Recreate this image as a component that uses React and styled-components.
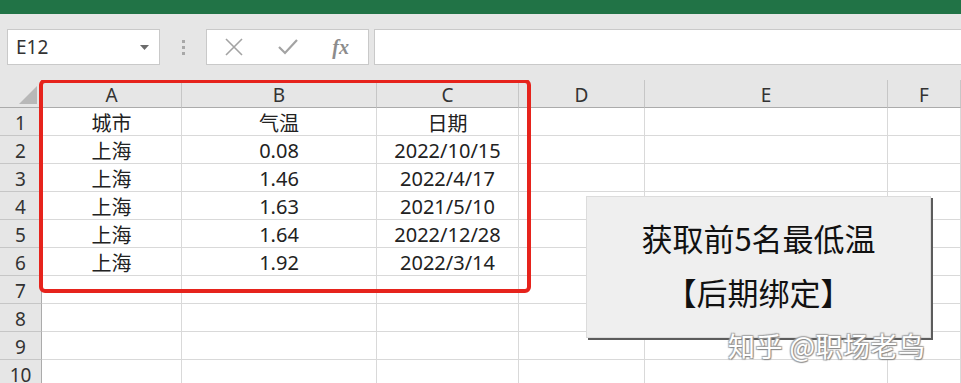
import React from "react";
import styled, { createGlobalStyle } from "styled-components";

const GlobalStyle = createGlobalStyle`
  html, body {
    margin: 0;
    padding: 0;
    background: #ffffff;
    overflow: hidden;
  }
  body {
    font-family: "Noto Sans", "Noto Sans CJK SC", sans-serif;
  }
`;

const columns = [
  { name: "A", width: 140 },
  { name: "B", width: 195 },
  { name: "C", width: 142 },
  { name: "D", width: 126 },
  { name: "E", width: 243 },
  { name: "F", width: 73 },
];

const rows = [
  ["城市", "气温", "日期"],
  ["上海", "0.08", "2022/10/15"],
  ["上海", "1.46", "2022/4/17"],
  ["上海", "1.63", "2021/5/10"],
  ["上海", "1.64", "2022/12/28"],
  ["上海", "1.92", "2022/3/14"],
  [],
  [],
  [],
  [],
];

const App = () => {
  return (
    <Page>
      <GlobalStyle />
      <TitleBar />
      <Toolbar>
        <NameBox>
          <NameText>E12</NameText>
          <svg width="9" height="5" viewBox="0 0 9 5">
            <path d="M0 0 L9 0 L4.5 5 Z" fill="#6b6b6b" />
          </svg>
        </NameBox>
        <Grip>
          <Dot />
          <Dot />
          <Dot />
        </Grip>
        <FormulaButtons>
          <svg width="18" height="18" viewBox="0 0 18 18">
            <path d="M1 1 L17 17 M17 1 L1 17" stroke="#a3a3a3" strokeWidth="1.6" />
          </svg>
          <svg width="20" height="16" viewBox="0 0 20 16">
            <path d="M1 8 L7 14 L19 1" stroke="#a3a3a3" strokeWidth="2.2" fill="none" />
          </svg>
          <FxText>fx</FxText>
        </FormulaButtons>
        <FormulaInput />
      </Toolbar>

      <Sheet>
        <Grid>
          <CornerCell>
            <svg width="18" height="18" viewBox="0 0 18 18">
              <path d="M18 0 L18 18 L0 18 Z" fill="#b8b8b8" />
            </svg>
          </CornerCell>
          {columns.map((col) => (
            <ColHeader key={col.name}>{col.name}</ColHeader>
          ))}
          {rows.map((row, r) => (
            <React.Fragment key={r}>
              <RowHeader>{r + 1}</RowHeader>
              {columns.map((col, c) => (
                <Cell key={col.name}>{row[c] || ""}</Cell>
              ))}
            </React.Fragment>
          ))}
        </Grid>

        <Highlight />

        <ShapeButton>
          <ShapeLine>获取前5名最低温</ShapeLine>
          <ShapeLine>【后期绑定】</ShapeLine>
        </ShapeButton>

        <Watermark>知乎 @职场老鸟</Watermark>
      </Sheet>
    </Page>
  );
};

const Page = styled.div`
  width: 961px;
  height: 383px;
  overflow: hidden;
  background: #ffffff;
  display: flex;
  flex-direction: column;
`;

const TitleBar = styled.div`
  height: 14px;
  background-color: #217346;
  flex-shrink: 0;
`;

const Toolbar = styled.div`
  height: 66px;
  flex-shrink: 0;
  background-color: #e6e6e6;
  display: flex;
  align-items: flex-start;
  padding: 15px 0 0 7px;
  box-sizing: border-box;
`;

const NameBox = styled.div`
  width: 153px;
  height: 36px;
  box-sizing: border-box;
  background: #ffffff;
  border: 1px solid #c9c9c9;
  display: flex;
  align-items: center;
  justify-content: space-between;
  padding: 0 10px 0 8px;
`;

const NameText = styled.span`
  font-size: 19px;
  color: #333333;
`;

const Grip = styled.div`
  width: 46px;
  height: 36px;
  display: flex;
  flex-direction: column;
  align-items: center;
  justify-content: center;
  gap: 3px;
`;

const Dot = styled.div`
  width: 3px;
  height: 3px;
  background: #a8a8a8;
`;

const FormulaButtons = styled.div`
  width: 163px;
  height: 36px;
  box-sizing: border-box;
  background: #ffffff;
  border: 1px solid #c9c9c9;
  display: flex;
  align-items: center;
  justify-content: space-between;
  padding: 0 19px 0 18px;
`;

const FxText = styled.span`
  font-family: "Liberation Serif", "DejaVu Serif", serif;
  font-style: italic;
  font-weight: bold;
  font-size: 20px;
  color: #8c8c8c;
`;

const FormulaInput = styled.div`
  flex: 1;
  height: 36px;
  margin-left: 5px;
  box-sizing: border-box;
  background: #ffffff;
  border: 1px solid #c9c9c9;
  border-right: none;
`;

const Sheet = styled.div`
  position: relative;
  flex: 1;
  overflow: hidden;
`;

const Grid = styled.div`
  display: grid;
  grid-template-columns: 42px 140px 195px 142px 126px 243px 73px;
  grid-auto-rows: 28px;
`;

const HeaderBase = styled.div`
  background: #e6e6e6;
  box-sizing: border-box;
  display: flex;
  align-items: center;
  justify-content: center;
  font-size: 19px;
  color: #333333;
`;

const CornerCell = styled(HeaderBase)`
  border-right: 1px solid #bdbdbd;
  border-bottom: 1px solid #ababab;
  align-items: flex-end;
  justify-content: flex-end;
  padding: 0 4px 3px 0;
`;

const ColHeader = styled(HeaderBase)`
  border-right: 1px solid #c6c6c6;
  border-bottom: 1px solid #ababab;
  padding-top: 2px;
`;

const RowHeader = styled(HeaderBase)`
  border-right: 1px solid #ababab;
  border-bottom: 1px solid #c6c6c6;
  padding-top: 2px;
`;

const Cell = styled.div`
  box-sizing: border-box;
  border-right: 1px solid #d9d9d9;
  border-bottom: 1px solid #d9d9d9;
  display: flex;
  align-items: center;
  justify-content: center;
  font-size: 20px;
  color: #222222;
  padding-top: 1px;
`;

const Highlight = styled.div`
  position: absolute;
  left: 39px;
  top: -1px;
  width: 492px;
  height: 214px;
  box-sizing: border-box;
  border: 4px solid #e6231c;
  border-radius: 6px;
  pointer-events: none;
`;

const ShapeButton = styled.div`
  position: absolute;
  left: 586px;
  top: 116px;
  width: 345px;
  height: 142px;
  box-sizing: border-box;
  background: #efefef;
  border: 1px solid #dcdcdc;
  box-shadow: 2px 2px 0 #5c5c5c;
  display: flex;
  flex-direction: column;
  align-items: center;
  justify-content: center;
  gap: 10px;
  padding-bottom: 4px;
`;

const ShapeLine = styled.div`
  font-family: "Noto Sans CJK SC", sans-serif;
  font-size: 31px;
  line-height: 44px;
  color: #111111;
`;

const Watermark = styled.div`
  position: absolute;
  left: 728px;
  top: 246px;
  font-family: "Noto Sans CJK SC", sans-serif;
  font-size: 27px;
  color: #ffffff;
  letter-spacing: 0.5px;
  text-shadow: 1px 1px 1px #8a8a8a, -1px -1px 1px #a8a8a8, 1px -1px 1px #a8a8a8,
    -1px 1px 1px #a8a8a8;
`;

export default App;
